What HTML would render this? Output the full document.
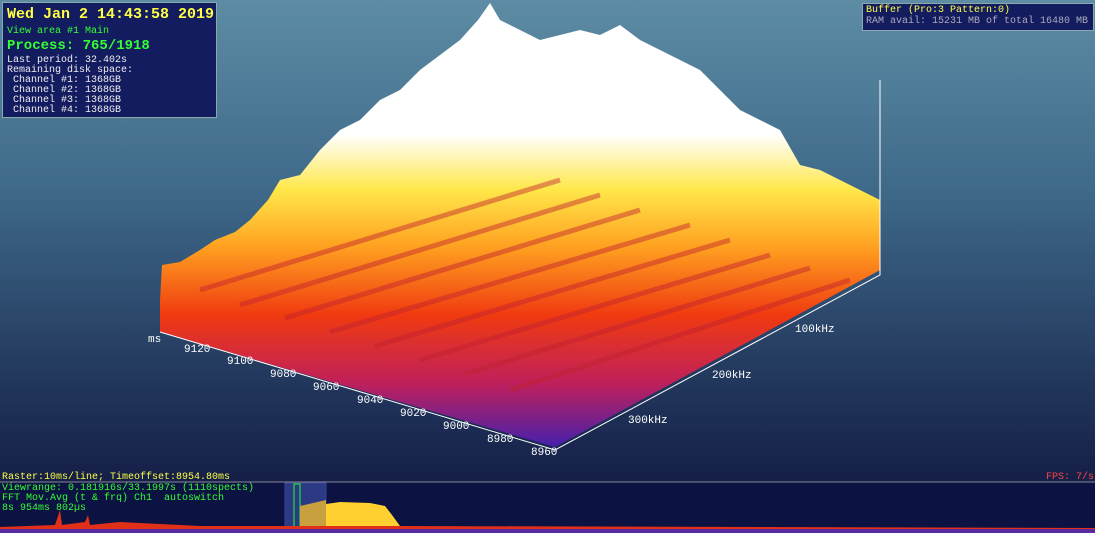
<!DOCTYPE html>
<html><head><style>
body{margin:0;width:1095px;height:533px;overflow:hidden;background:linear-gradient(#5d8ca4 0%,#3f6a8a 35%,#23395e 70%,#151f48 90%);font-family:"Liberation Mono",monospace;position:relative}
.box{position:absolute;background:#141c60;border:1px solid #8aa;}
.t{position:absolute;white-space:pre;line-height:1}
</style></head><body>
<svg width="1095" height="533" style="position:absolute;left:0;top:0">
<defs>
<linearGradient id="g" gradientUnits="userSpaceOnUse" x1="0" y1="0" x2="0" y2="450">
<stop offset="0" stop-color="#fff"/><stop offset="0.3" stop-color="#fff"/>
<stop offset="0.42" stop-color="#ffe84a"/><stop offset="0.55" stop-color="#ffa020"/>
<stop offset="0.7" stop-color="#f03a10"/><stop offset="0.85" stop-color="#c0205a"/>
<stop offset="1" stop-color="#4020b0"/></linearGradient>
</defs>
<polygon fill="url(#g)" points="160,300 162,265 180,262 200,250 215,240 235,232 250,220 268,200 280,180 300,175 320,150 340,130 360,120 380,100 400,90 420,70 440,55 460,40 478,20 490,3 500,20 520,30 540,40 560,35 580,30 600,35 620,25 640,40 660,50 680,60 700,70 720,90 740,110 760,120 780,130 800,165 820,170 840,180 860,190 880,200 880,270 555,447 160,332"/>
<g stroke="#c02030" stroke-width="5" opacity="0.45">
<line x1="200" y1="290" x2="560" y2="180"/><line x1="240" y1="305" x2="600" y2="195"/>
<line x1="285" y1="318" x2="640" y2="210"/><line x1="330" y1="332" x2="690" y2="225"/>
<line x1="375" y1="346" x2="730" y2="240"/><line x1="420" y1="360" x2="770" y2="255"/>
<line x1="465" y1="374" x2="810" y2="268"/><line x1="510" y1="390" x2="850" y2="280"/>
</g>
<polyline fill="none" stroke="#fff" stroke-width="1" points="160,332 555,450 880,275 880,80"/>
<g fill="#fff" font-family="Liberation Mono" font-size="11">
<text x="148" y="342">ms</text>
<text x="184" y="352">9120</text><text x="227" y="364">9100</text><text x="270" y="377">9080</text>
<text x="313" y="390">9060</text><text x="357" y="403">9040</text><text x="400" y="416">9020</text>
<text x="443" y="429">9000</text><text x="487" y="442">8980</text><text x="531" y="455">8960</text>
<text x="795" y="332">100kHz</text><text x="712" y="378">200kHz</text><text x="628" y="423">300kHz</text>
</g>
<rect x="0" y="482" width="1095" height="51" fill="#0c1242"/>
<line x1="0" y1="482" x2="1095" y2="482" stroke="#889" />
<rect x="285" y="483" width="41" height="50" fill="#3a4aa0" opacity="0.7" stroke="#4a5ac0"/>
<rect x="294" y="484" width="6" height="46" fill="none" stroke="#2f2"/>
<polygon fill="#c8a040" points="300,506 326,500 326,530 300,530"/>
<polygon fill="#ffd030" points="326,504 340,502 370,503 385,506 392,515 400,526 326,528"/>
<polygon fill="#e03018" points="0,527 55,525 60,510 62,525 85,522 88,515 90,525 120,522 200,526 300,526 400,526 1095,528 1095,533 0,533"/>
<rect x="0" y="529" width="1095" height="4" fill="#5a2aa0"/>
</svg>
<div class="box" style="left:2px;top:2px;width:213px;height:114px">
<div class="t" style="left:4px;top:4px;color:#ff4;font-size:15px;font-weight:bold">Wed Jan 2 14:43:58 2019</div>
<div class="t" style="left:4px;top:24px;color:#3f3;font-size:10px">View area #1 Main</div>
<div class="t" style="left:4px;top:36px;color:#3f3;font-size:14px;font-weight:bold">Process: 765/1918</div>
<div class="t" style="left:4px;top:53px;color:#eee;font-size:10px;line-height:10px">Last period: 32.402s
Remaining disk space:
 Channel #1: 1368GB
 Channel #2: 1368GB
 Channel #3: 1368GB
 Channel #4: 1368GB</div>
</div>
<div class="box" style="left:862px;top:3px;width:230px;height:26px">
<div class="t" style="left:3px;top:2px;color:#ff4;font-size:10px">Buffer (Pro:3 Pattern:0)</div>
<div class="t" style="left:3px;top:13px;color:#aab;font-size:10px">RAM avail: 15231 MB of total 16480 MB</div>
</div>
<div class="t" style="left:2px;top:473px;color:#ff4;font-size:10px">Raster:10ms/line; Timeoffset:8954.80ms</div>
<div class="t" style="left:1046px;top:473px;color:#f44;font-size:10px">FPS: 7/s</div>
<div class="t" style="left:2px;top:484px;color:#3f3;font-size:10px;line-height:10px">Viewrange: 0.181916s/33.1997s (1110spects)
FFT Mov.Avg (t &amp; frq) Ch1  autoswitch
8s 954ms 802µs</div>
</body></html>
